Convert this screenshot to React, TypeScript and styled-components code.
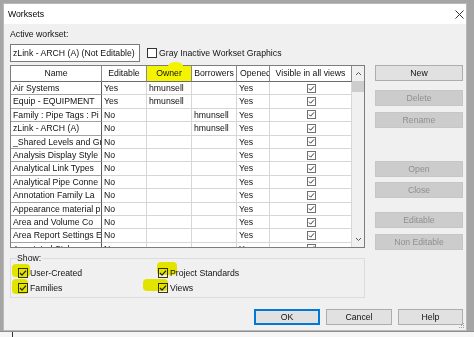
import React from "react";
import styled, { createGlobalStyle } from "styled-components";

const GlobalStyle = createGlobalStyle`
  html, body {
    margin: 0;
    padding: 0;
  }
  body {
    background: #a5a5a5;
    font-family: "Liberation Sans", Arial, sans-serif;
    font-size: 8.7px;
    color: #111;
  }
`;

const Screen = styled.div`
  width: 474px;
  height: 337px;
  display: flex;
  flex-direction: column;
  background: #a5a5a5;
  overflow: hidden;
`;

const Desk = styled.div`
  flex: 1;
  display: flex;
  padding: 3px 7px 0 3px;
`;

const BottomStrip = styled.div`
  height: 6px;
  background: #f6f6f6;
  border-top: 1px solid #8e8e8e;
  box-sizing: border-box;
  padding-left: 12px;
`;

const Tick = styled.div`
  width: 1px;
  height: 100%;
  background: #333;
`;

const Dialog = styled.div`
  position: relative;
  width: 464px;
  height: 328px;
  box-sizing: border-box;
  border: 1px solid #b8b8b8;
  background: #f0f0f0;
  display: flex;
  flex-direction: column;
`;

const TitleBar = styled.div`
  height: 20px;
  background: #fff;
  display: flex;
  align-items: center;
  justify-content: space-between;
  padding: 0 2px 0 4px;
`;

const Title = styled.span`
  font-size: 8.7px;
  color: #000;
`;

const Body = styled.div`
  flex: 1;
  display: flex;
  flex-direction: column;
  padding: 4px 3px 0 6px;
`;

const Label = styled.div`
  line-height: 12px;
  height: 12px;
`;

const SelectRow = styled.div`
  display: flex;
  align-items: center;
  margin-top: 4px;
  height: 18px;
`;

const Select = styled.div`
  width: 130px;
  height: 18px;
  box-sizing: border-box;
  border: 1px solid #7a7a7a;
  background: #fff;
  display: flex;
  align-items: center;
  justify-content: space-between;
  padding: 0 3px 0 2px;
  white-space: nowrap;
`;

const CheckLabel = styled.label`
  display: flex;
  align-items: center;
  gap: 2px;
  margin-left: 7px;
  white-space: nowrap;
`;

const MainRow = styled.div`
  display: flex;
  gap: 10px;
  margin-top: 3px;
`;

const Table = styled.div`
  width: 355px;
  height: 183px;
  box-sizing: border-box;
  border: 1px solid #7d7d7d;
  background: #fff;
  display: flex;
`;

const Columns = styled.div`
  flex: 1;
  display: flex;
  flex-direction: column;
  min-width: 0;
`;

const cols = "91px 45px 45px 45px 33px 82px";

const HeaderRow = styled.div`
  display: grid;
  grid-template-columns: ${cols};
  height: 16px;
`;

const HeaderCell = styled.div<{ $mark?: boolean; $inset?: number }>`
  position: relative;
  box-sizing: border-box;
  border-right: 1px solid #8a8a8a;
  border-bottom: 1px solid #6c6c6c;
  background: ${(p) => (p.$mark ? "#f4f400" : "#fff")};
  line-height: 15px;
  text-align: ${(p) => (p.$inset ? "left" : "center")};
  padding-left: ${(p) => p.$inset ?? 0}px;
  white-space: nowrap;
  overflow: ${(p) => (p.$mark ? "visible" : "hidden")};
  color: #111;

  &::before {
    content: "";
    display: ${(p) => (p.$mark ? "block" : "none")};
    position: absolute;
    left: 21px;
    top: -4px;
    width: 15px;
    height: 8px;
    border-radius: 50%;
    background: #f4f400;
  }
`;

const HeaderText = styled.span`
  position: relative;
`;

const BodyRows = styled.div`
  flex: 1;
  min-height: 0;
  overflow: hidden;
  display: grid;
  grid-template-columns: ${cols};
  grid-auto-rows: 13.4px;
  align-content: start;
`;

const Cell = styled.div<{ $name?: boolean; $center?: boolean }>`
  box-sizing: border-box;
  border-right: 1px solid ${(p) => (p.$name ? "#5a5a5a" : "#d6d6d6")};
  border-bottom: 1px solid ${(p) => (p.$name ? "#a3a3a3" : "#d6d6d6")};
  padding-left: 2px;
  line-height: 12.4px;
  white-space: nowrap;
  overflow: hidden;
  display: flex;
  align-items: center;
  justify-content: ${(p) => (p.$center ? "center" : "flex-start")};
  color: #111;
`;

const Scrollbar = styled.div`
  width: 12px;
  background: #f0f0f0;
  display: flex;
  flex-direction: column;
  align-items: center;
`;

const Arrow = styled.div`
  height: 15px;
  display: flex;
  align-items: center;
  justify-content: center;
`;

const Thumb = styled.div`
  width: 12px;
  height: 11px;
  background: #cdcdcd;
`;

const Spacer = styled.div`
  flex: 1;
`;

const ButtonColumn = styled.div`
  width: 88px;
  display: flex;
  flex-direction: column;
`;

const SideButton = styled.div<{ $top: number; $disabled?: boolean }>`
  height: 16px;
  margin-top: ${(p) => p.$top}px;
  box-sizing: border-box;
  border: 1px solid ${(p) => (p.$disabled ? "#c6c6c6" : "#adadad")};
  background: ${(p) => (p.$disabled ? "#cccccc" : "#e1e1e1")};
  color: ${(p) => (p.$disabled ? "#8f8f8f" : "#111")};
  display: flex;
  align-items: center;
  justify-content: center;
`;

const ShowBox = styled.fieldset`
  width: 355px;
  box-sizing: border-box;
  margin: 2px 0 0 0;
  padding: 0 0 2px 7px;
  border: 1px solid #dcdcdc;
  min-width: 0;
`;

const Legend = styled.legend`
  padding: 0;
  margin-left: -1px;
  line-height: 12px;
`;

const ShowGrid = styled.div`
  display: grid;
  grid-template-columns: 140px 1fr;
  grid-auto-rows: 15px;
  margin-top: 1px;
`;

const ShowItem = styled.label`
  position: relative;
  display: flex;
  align-items: center;
  gap: 2px;
  white-space: nowrap;
`;

const Marker = styled.span<{ $l: number; $t: number; $w: number; $h: number }>`
  position: absolute;
  left: ${(p) => p.$l}px;
  top: ${(p) => p.$t}px;
  width: ${(p) => p.$w}px;
  height: ${(p) => p.$h}px;
  background: #f2f200;
  border-radius: 4px;
  mix-blend-mode: multiply;
`;

const FooterRow = styled.div`
  display: flex;
  justify-content: flex-end;
  gap: 6px;
  margin-top: 11px;
`;

const FooterButton = styled.div<{ $w: number; $default?: boolean }>`
  width: ${(p) => p.$w}px;
  height: 16px;
  box-sizing: border-box;
  border: 1px solid ${(p) => (p.$default ? "#0078d7" : "#adadad")};
  box-shadow: ${(p) => (p.$default ? "inset 0 0 0 1px #0078d7" : "none")};
  background: #e1e1e1;
  display: flex;
  align-items: center;
  justify-content: center;
  color: #111;
`;

const Grip = styled.svg`
  position: absolute;
  right: 1px;
  bottom: 1px;
`;

const Chevron = ({ up }: { up?: boolean }) => (
  <svg width="7" height="5" viewBox="0 0 7 5">
    <polyline
      points={up ? "1,4 3.5,1.5 6,4" : "1,1 3.5,3.5 6,1"}
      fill="none"
      stroke="#555"
      strokeWidth="1"
    />
  </svg>
);

const SmallCheck = () => (
  <svg width="9" height="9" viewBox="0 0 9 9">
    <rect x="0.5" y="0.5" width="8" height="8" fill="#fff" stroke="#707070" />
    <polyline points="2,4.5 3.6,6.2 7,2.4" fill="none" stroke="#333" strokeWidth="1" />
  </svg>
);

const BoxCheck = ({ checked }: { checked?: boolean }) => (
  <svg width="10" height="10" viewBox="0 0 10 10">
    <rect x="0.5" y="0.5" width="9" height="9" fill={checked ? "none" : "#fff"} stroke="#333" />
    {checked && (
      <polyline points="2,5 4,7.2 8,2.6" fill="none" stroke="#222" strokeWidth="1.2" />
    )}
  </svg>
);

const rows: string[][] = [
  ["Air Systems", "Yes", "hmunsell", "", "Yes"],
  ["Equip - EQUIPMENT", "Yes", "hmunsell", "", "Yes"],
  ["Family  : Pipe Tags : Pi", "No", "", "hmunsell", "Yes"],
  ["zLink - ARCH (A)", "No", "", "hmunsell", "Yes"],
  ["_Shared Levels and Gri", "No", "", "", "Yes"],
  ["Analysis Display Style", "No", "", "", "Yes"],
  ["Analytical Link Types", "No", "", "", "Yes"],
  ["Analytical Pipe Conne", "No", "", "", "Yes"],
  ["Annotation Family La", "No", "", "", "Yes"],
  ["Appearance material p", "No", "", "", "Yes"],
  ["Area and Volume Co", "No", "", "", "Yes"],
  ["Area Report Settings El", "No", "", "", "Yes"],
  ["Annotated Styles", "No", "", "", "Yes"],
];

const headers = [
  { label: "Name" },
  { label: "Editable" },
  { label: "Owner", mark: true },
  { label: "Borrowers" },
  { label: "Opened", inset: 3 },
  { label: "Visible in all views" },
];

const sideButtons = [
  { label: "New", top: 0 },
  { label: "Delete", top: 9, disabled: true },
  { label: "Rename", top: 6, disabled: true },
  { label: "Open", top: 33, disabled: true },
  { label: "Close", top: 5, disabled: true },
  { label: "Editable", top: 14, disabled: true },
  { label: "Non Editable", top: 6, disabled: true },
];

export default function App() {
  return (
    <Screen>
      <GlobalStyle />
      <Desk>
        <Dialog>
          <TitleBar>
            <Title>Worksets</Title>
            <svg width="9" height="9" viewBox="0 0 9 9">
              <path d="M0.5 0.5 L8.5 8.5 M8.5 0.5 L0.5 8.5" stroke="#333" strokeWidth="1" />
            </svg>
          </TitleBar>
          <Body>
            <Label>Active workset:</Label>
            <SelectRow>
              <Select>
                <span>zLink - ARCH (A) (Not Editable)</span>
                <Chevron />
              </Select>
              <CheckLabel>
                <BoxCheck />
                <span>Gray Inactive Workset Graphics</span>
              </CheckLabel>
            </SelectRow>
            <MainRow>
              <Table>
                <Columns>
                  <HeaderRow>
                    {headers.map((h) => (
                      <HeaderCell key={h.label} $mark={h.mark} $inset={h.inset}>
                        <HeaderText>{h.label}</HeaderText>
                      </HeaderCell>
                    ))}
                  </HeaderRow>
                  <BodyRows>
                    {rows.map((r, i) => (
                      <React.Fragment key={i}>
                        <Cell $name>{r[0]}</Cell>
                        <Cell>{r[1]}</Cell>
                        <Cell>{r[2]}</Cell>
                        <Cell>{r[3]}</Cell>
                        <Cell>{r[4]}</Cell>
                        <Cell $center>
                          <SmallCheck />
                        </Cell>
                      </React.Fragment>
                    ))}
                  </BodyRows>
                </Columns>
                <Scrollbar>
                  <Arrow>
                    <Chevron up />
                  </Arrow>
                  <Thumb />
                  <Spacer />
                  <Arrow>
                    <Chevron />
                  </Arrow>
                </Scrollbar>
              </Table>
              <ButtonColumn>
                {sideButtons.map((b) => (
                  <SideButton key={b.label} $top={b.top} $disabled={b.disabled}>
                    {b.label}
                  </SideButton>
                ))}
              </ButtonColumn>
            </MainRow>
            <ShowBox>
              <Legend>Show:</Legend>
              <ShowGrid>
                <ShowItem>
                  <Marker $l={-6} $t={-1} $w={18} $h={13} />
                  <BoxCheck checked />
                  <span>User-Created</span>
                </ShowItem>
                <ShowItem>
                  <Marker $l={-1} $t={-3} $w={20} $h={13} />
                  <BoxCheck checked />
                  <span>Project Standards</span>
                </ShowItem>
                <ShowItem>
                  <Marker $l={-6} $t={-1} $w={16} $h={15} />
                  <BoxCheck checked />
                  <span>Families</span>
                </ShowItem>
                <ShowItem>
                  <Marker $l={-15} $t={-1} $w={25} $h={12} />
                  <BoxCheck checked />
                  <span>Views</span>
                </ShowItem>
              </ShowGrid>
            </ShowBox>
            <FooterRow>
              <FooterButton $w={66} $default>
                OK
              </FooterButton>
              <FooterButton $w={66}>Cancel</FooterButton>
              <FooterButton $w={65}>Help</FooterButton>
            </FooterRow>
          </Body>
          <Grip width="6" height="6" viewBox="0 0 6 6">
            <rect x="4" y="0" width="1" height="1" fill="#a0a0a0" />
            <rect x="2" y="2" width="1" height="1" fill="#a0a0a0" />
            <rect x="4" y="2" width="1" height="1" fill="#a0a0a0" />
            <rect x="0" y="4" width="1" height="1" fill="#a0a0a0" />
            <rect x="2" y="4" width="1" height="1" fill="#a0a0a0" />
            <rect x="4" y="4" width="1" height="1" fill="#a0a0a0" />
          </Grip>
        </Dialog>
      </Desk>
      <BottomStrip>
        <Tick />
      </BottomStrip>
    </Screen>
  );
}
